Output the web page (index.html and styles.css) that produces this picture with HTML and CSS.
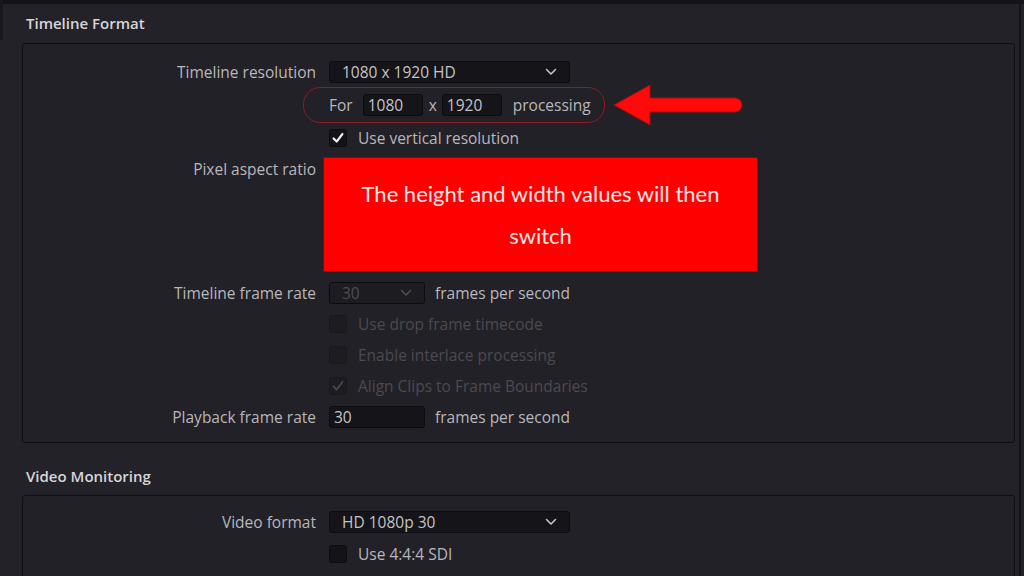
FILE: index.html
```html
<!DOCTYPE html>
<html lang="en">
<head>
<meta charset="utf-8">
<title>Timeline Format</title>
<link rel="stylesheet" href="styles.css">
</head>
<body>
<div class="app">
  <div class="topbar"></div>
  <div class="page">
    <h2 class="section-title first">Timeline Format</h2>
    <div class="group">
      <div class="row tall">
        <span class="label">Timeline resolution</span>
        <div class="ctl">
          <div class="select wide"><span>1080 x 1920 HD</span><svg class="chev" viewBox="0 0 12 8"><path d="M1.5 1.5 6 6l4.5-4.5"/></svg></div>
        </div>
      </div>
      <div class="row tall">
        <span class="label"></span>
        <div class="ctl res-row">
          <span class="txt">For</span>
          <div class="input num">1080</div>
          <span class="txt x">x</span>
          <div class="input num">1920</div>
          <span class="txt proc">processing</span>
          <svg class="arrow" viewBox="0 0 130 42">
            <path d="M1 21 37 1v13h85a7 7 0 0 1 0 14H37v13z" fill="#ff0a0a" stroke="#9e1010" stroke-width="1" stroke-linejoin="round"/>
          </svg>
        </div>
      </div>
      <div class="row tall">
        <span class="label"></span>
        <div class="ctl">
          <span class="check on"><svg viewBox="0 0 18 18"><path d="M4 9.5 7.5 13 14 4.5"/></svg></span>
          <span class="txt">Use vertical resolution</span>
        </div>
      </div>
      <div class="row pixel">
        <span class="label">Pixel aspect ratio</span>
        <div class="ctl"></div>
      </div>
      <div class="row">
        <span class="label">Timeline frame rate</span>
        <div class="ctl">
          <div class="select small disabled"><span>30</span><svg class="chev" viewBox="0 0 12 8"><path d="M1.5 1.5 6 6l4.5-4.5"/></svg></div>
          <span class="txt after">frames per second</span>
        </div>
      </div>
      <div class="row">
        <span class="label"></span>
        <div class="ctl">
          <span class="check disabled"></span>
          <span class="txt dim">Use drop frame timecode</span>
        </div>
      </div>
      <div class="row">
        <span class="label"></span>
        <div class="ctl">
          <span class="check disabled"></span>
          <span class="txt dim">Enable interlace processing</span>
        </div>
      </div>
      <div class="row">
        <span class="label"></span>
        <div class="ctl">
          <span class="check disabled on"><svg viewBox="0 0 18 18"><path d="M4 9.5 7.5 13 14 4.5"/></svg></span>
          <span class="txt dim">Align Clips to Frame Boundaries</span>
        </div>
      </div>
      <div class="row">
        <span class="label">Playback frame rate</span>
        <div class="ctl">
          <div class="input small">30</div>
          <span class="txt after">frames per second</span>
        </div>
      </div>
      <div class="note">
        <p>The height and width values will then switch</p>
      </div>
    </div>

    <h2 class="section-title">Video Monitoring</h2>
    <div class="group second">
      <div class="row">
        <span class="label">Video format</span>
        <div class="ctl">
          <div class="select wide"><span>HD 1080p 30</span><svg class="chev" viewBox="0 0 12 8"><path d="M1.5 1.5 6 6l4.5-4.5"/></svg></div>
        </div>
      </div>
      <div class="row tall">
        <span class="label"></span>
        <div class="ctl">
          <span class="check"></span>
          <span class="txt">Use 4:4:4 SDI</span>
        </div>
      </div>
      <div class="row tall">
        <span class="label"></span>
        <div class="ctl">
          <span class="check"></span>
        </div>
      </div>
    </div>
  </div>
</div>
</body>
</html>
```
FILE: styles.css
```css
* { box-sizing: border-box; }
html, body {
  margin: 0;
  padding: 0;
  background: #232228;
  overflow: hidden;
}
body {
  font-family: "Open Sans", "Noto Sans", sans-serif;
  font-size: 15.5px;
  color: #b8b7bb;
}
.app {
  position: relative;
  width: 1024px;
  height: 576px;
  overflow: hidden;
}
.app::before {
  content: "";
  position: absolute;
  left: 0;
  top: 0;
  width: 3px;
  height: 40px;
  background: #18171b;
}
.app::after {
  content: "";
  position: absolute;
  right: 3px;
  top: 4px;
  width: 2px;
  height: 572px;
  background: #141317;
}
.topbar {
  height: 4px;
  background: #141317;
}
.page {
  padding: 0 9px 0 22px;
}
.section-title {
  margin: 0;
  padding: 14px 0 0 4px;
  height: 52px;
  line-height: 38px;
  font-size: 15px;
  font-weight: 600;
  color: #d6d5d9;
}
.section-title.first {
  padding-top: 0;
  height: 39px;
  line-height: 39px;
}
.group {
  position: relative;
  width: 993px;
  border: 1px solid #0f0f12;
  border-radius: 3px;
  padding: 11px 0 10px;
  background: #222127;
}
.group.second {
  padding-top: 10px;
}
.row {
  display: grid;
  grid-template-columns: 293px 1fr;
  column-gap: 13px;
  align-items: center;
  height: 31px;
}
.row.tall { height: 33px; }
.row.pixel {
  height: 123px;
  align-items: start;
}
.row.pixel .label { padding-top: 4px; }
.label {
  text-align: right;
  white-space: nowrap;
}
.ctl {
  display: flex;
  align-items: center;
  position: relative;
  height: 100%;
}
.txt { white-space: nowrap; }
.txt.dim { color: #4b4a4f; }
.txt.after { margin-left: 10px; }
.select {
  display: flex;
  align-items: center;
  justify-content: space-between;
  height: 22px;
  background: #151418;
  border: 1px solid #0c0c0e;
  border-radius: 3px;
  padding: 0 12px 0 12px;
  color: #c4c3c7;
}
.select.wide { width: 241px; }
.select.small { width: 96px; }
.select.disabled { color: #4e4d52; background: #1d1c21; }
.chev {
  width: 12px;
  height: 8px;
  fill: none;
  stroke: currentColor;
  stroke-width: 1.6;
  stroke-linecap: round;
  stroke-linejoin: round;
}
.select.disabled .chev { stroke: #4e4d52; }
.input {
  height: 22px;
  background: #151418;
  border: 1px solid #0c0c0e;
  border-radius: 3px;
  padding: 0 4px;
  line-height: 20px;
  color: #c4c3c7;
}
.input.num { width: 60px; }
.input.small { width: 96px; }
.res-row .txt:first-child { margin-right: 10px; }
.res-row .x { margin: 0 5px 0 6px; }
.res-row .proc { margin-left: 11px; }
.res-row::before {
  content: "";
  position: absolute;
  left: -26px;
  top: -1px;
  width: 300px;
  height: 34px;
  border: 1.5px solid #8e1c22;
  border-radius: 17px;
}
.arrow {
  position: absolute;
  left: 284px;
  top: -4px;
  width: 130px;
  height: 42px;
}
.check {
  display: inline-flex;
  align-items: center;
  justify-content: center;
  width: 18px;
  height: 18px;
  margin-right: 11px;
  background: #141317;
  border: 1px solid #0c0c0e;
  border-radius: 3px;
}
.check svg {
  width: 18px;
  height: 18px;
  fill: none;
  stroke: #f2f2f2;
  stroke-width: 2.4;
  stroke-linecap: round;
  stroke-linejoin: round;
}
.check.disabled {
  background: #1d1c21;
  border-color: #19181c;
}
.check.disabled svg { stroke: #4b4a4f; stroke-width: 2; }
.note {
  position: absolute;
  left: 300px;
  top: 113px;
  width: 435px;
  height: 115px;
  background: #fe0000;
  border: 1px solid #6e1214;
  display: flex;
  align-items: center;
  justify-content: center;
  padding: 0 30px;
}
.note p {
  margin: 0;
  text-align: center;
  font-family: "Lato", "Open Sans", sans-serif;
  font-size: 22px;
  line-height: 42px;
  color: #fbe6e6;
}
```
